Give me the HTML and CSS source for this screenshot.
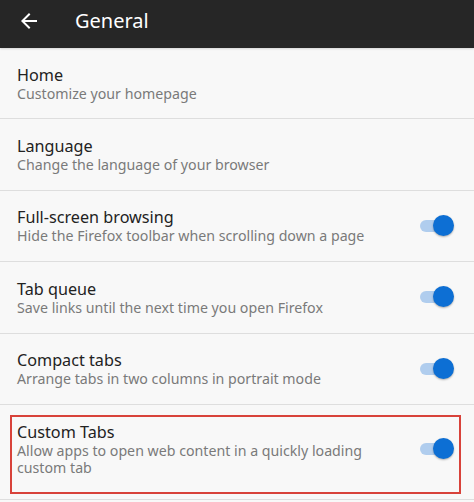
FILE: index.html
```html
<!DOCTYPE html>
<html>
<head>
  <meta charset="utf-8"/>
  <title>General</title>
  <link rel="stylesheet" href="styles.css">
</head>
<body>
  <div class="toolbar">
    <svg class="back" width="24" height="24" viewBox="0 0 24 24">
      <path d="M20 11H7.83l5.59-5.59L12 4l-8 8 8 8 1.41-1.41L7.83 13H20v-2z" fill="#fff"/>
    </svg>
    <span class="toolbar-title">General</span>
  </div>

  <div class="list">
    <div class="row">
      <div class="text">
        <div class="title">Home</div>
        <div class="summary">Customize your homepage</div>
      </div>
    </div>
    <div class="row">
      <div class="text">
        <div class="title">Language</div>
        <div class="summary">Change the language of your browser</div>
      </div>
    </div>
    <div class="row">
      <div class="text">
        <div class="title">Full-screen browsing</div>
        <div class="summary">Hide the Firefox toolbar when scrolling down a page</div>
      </div>
      <span class="switch on"></span>
    </div>
    <div class="row">
      <div class="text">
        <div class="title">Tab queue</div>
        <div class="summary">Save links until the next time you open Firefox</div>
      </div>
      <span class="switch on"></span>
    </div>
    <div class="row">
      <div class="text">
        <div class="title">Compact tabs</div>
        <div class="summary">Arrange tabs in two columns in portrait mode</div>
      </div>
      <span class="switch on"></span>
    </div>
    <div class="row highlighted">
      <div class="marked">
        <div class="text">
          <div class="title">Custom Tabs</div>
          <div class="summary">Allow apps to open web content in a quickly loading custom tab</div>
        </div>
        <span class="switch on"></span>
      </div>
    </div>
  </div>
</body>
</html>
```

FILE: styles.css
```css
body {
  margin: 0;
  font-family: "Noto Sans", "Open Sans", sans-serif;
  background-color: #f8f8f8;
}

.toolbar {
  display: flex;
  align-items: center;
  padding: 9px 0 15px 17px;
  background-color: #262626;
  box-shadow: 0 1px 2px rgba(0,0,0,0.15);
}
.back {
  display: block;
}
.toolbar-title {
  margin-left: 34px;
  color: #fff;
  font-size: 20px;
  line-height: 24px;
}

.row {
  display: flex;
  align-items: center;
  padding: 16.7px 20px 16.7px 17px;
  border-bottom: 1px solid #dedede;
}
.text {
  flex: 1;
  margin-right: 40px;
}
.title {
  color: #222;
  font-size: 16.2px;
  line-height: 20px;
}
.summary {
  color: #7a7a7a;
  font-size: 14.2px;
  line-height: 17px;
}

.highlighted {
  padding: 10px 13px 5px 10px;
}
.marked {
  flex: 1;
  display: flex;
  align-items: center;
  padding: 5px 5px 16px 5px;
  border: 2px solid #d8423a;
}

.switch {
  position: relative;
  width: 34px;
  height: 22px;
  flex-shrink: 0;
}
.switch:before {
  content: "";
  position: absolute;
  left: 0;
  top: 5px;
  width: 30px;
  height: 12px;
  border-radius: 6px;
  background-color: #b0cdee;
}
.switch:after {
  content: "";
  position: absolute;
  right: 0;
  top: 0;
  width: 21px;
  height: 21px;
  border-radius: 50%;
  background-color: #0d6fd4;
  box-shadow: 0 1px 2px rgba(0,0,0,0.3);
}
```
